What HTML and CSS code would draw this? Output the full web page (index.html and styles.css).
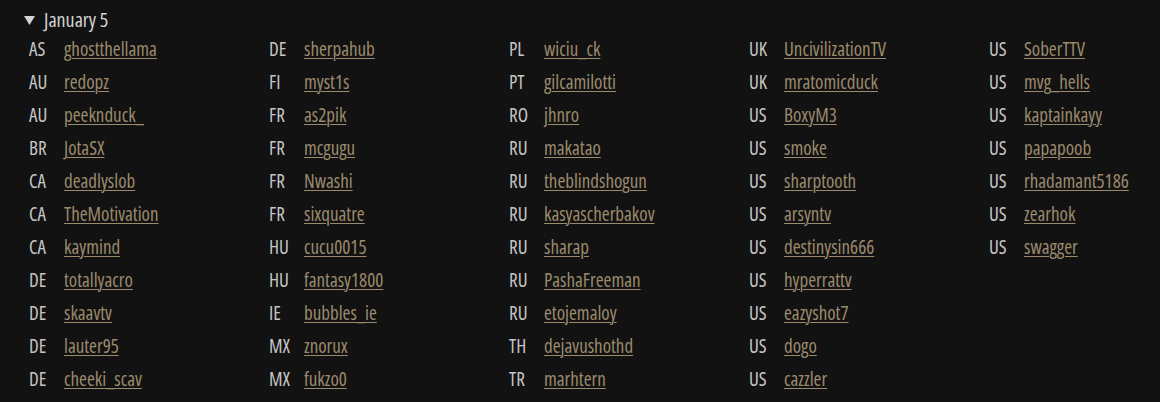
FILE: index.html
```html
<!DOCTYPE html>
<html>
<head>
<meta charset="utf-8">
<link rel="stylesheet" href="styles.css">
</head>
<body>
<section class="day">
  <div class="day-head">
    <svg class="caret" width="11" height="9" viewBox="0 0 11 9"><polygon points="0,0 11,0 5.5,9" fill="currentColor"/></svg>
    <span class="day-title">January 5</span>
  </div>
  <div class="list">
    <div class="entry"><span class="cc">AS</span><a href="#">ghostthellama</a></div>
    <div class="entry"><span class="cc">AU</span><a href="#">redopz</a></div>
    <div class="entry"><span class="cc">AU</span><a href="#">peeknduck_</a></div>
    <div class="entry"><span class="cc">BR</span><a href="#">JotaSX</a></div>
    <div class="entry"><span class="cc">CA</span><a href="#">deadlyslob</a></div>
    <div class="entry"><span class="cc">CA</span><a href="#">TheMotivation</a></div>
    <div class="entry"><span class="cc">CA</span><a href="#">kaymind</a></div>
    <div class="entry"><span class="cc">DE</span><a href="#">totallyacro</a></div>
    <div class="entry"><span class="cc">DE</span><a href="#">skaavtv</a></div>
    <div class="entry"><span class="cc">DE</span><a href="#">lauter95</a></div>
    <div class="entry"><span class="cc">DE</span><a href="#">cheeki_scav</a></div>

    <div class="entry"><span class="cc">DE</span><a href="#">sherpahub</a></div>
    <div class="entry"><span class="cc">FI</span><a href="#">myst1s</a></div>
    <div class="entry"><span class="cc">FR</span><a href="#">as2pik</a></div>
    <div class="entry"><span class="cc">FR</span><a href="#">mcgugu</a></div>
    <div class="entry"><span class="cc">FR</span><a href="#">Nwashi</a></div>
    <div class="entry"><span class="cc">FR</span><a href="#">sixquatre</a></div>
    <div class="entry"><span class="cc">HU</span><a href="#">cucu0015</a></div>
    <div class="entry"><span class="cc">HU</span><a href="#">fantasy1800</a></div>
    <div class="entry"><span class="cc">IE</span><a href="#">bubbles_ie</a></div>
    <div class="entry"><span class="cc">MX</span><a href="#">znorux</a></div>
    <div class="entry"><span class="cc">MX</span><a href="#">fukzo0</a></div>

    <div class="entry"><span class="cc">PL</span><a href="#">wiciu_ck</a></div>
    <div class="entry"><span class="cc">PT</span><a href="#">gilcamilotti</a></div>
    <div class="entry"><span class="cc">RO</span><a href="#">jhnro</a></div>
    <div class="entry"><span class="cc">RU</span><a href="#">makatao</a></div>
    <div class="entry"><span class="cc">RU</span><a href="#">theblindshogun</a></div>
    <div class="entry"><span class="cc">RU</span><a href="#">kasyascherbakov</a></div>
    <div class="entry"><span class="cc">RU</span><a href="#">sharap</a></div>
    <div class="entry"><span class="cc">RU</span><a href="#">PashaFreeman</a></div>
    <div class="entry"><span class="cc">RU</span><a href="#">etojemaloy</a></div>
    <div class="entry"><span class="cc">TH</span><a href="#">dejavushothd</a></div>
    <div class="entry"><span class="cc">TR</span><a href="#">marhtern</a></div>

    <div class="entry"><span class="cc">UK</span><a href="#">UncivilizationTV</a></div>
    <div class="entry"><span class="cc">UK</span><a href="#">mratomicduck</a></div>
    <div class="entry"><span class="cc">US</span><a href="#">BoxyM3</a></div>
    <div class="entry"><span class="cc">US</span><a href="#">smoke</a></div>
    <div class="entry"><span class="cc">US</span><a href="#">sharptooth</a></div>
    <div class="entry"><span class="cc">US</span><a href="#">arsyntv</a></div>
    <div class="entry"><span class="cc">US</span><a href="#">destinysin666</a></div>
    <div class="entry"><span class="cc">US</span><a href="#">hyperrattv</a></div>
    <div class="entry"><span class="cc">US</span><a href="#">eazyshot7</a></div>
    <div class="entry"><span class="cc">US</span><a href="#">dogo</a></div>
    <div class="entry"><span class="cc">US</span><a href="#">cazzler</a></div>

    <div class="entry"><span class="cc">US</span><a href="#">SoberTTV</a></div>
    <div class="entry"><span class="cc">US</span><a href="#">mvg_hells</a></div>
    <div class="entry"><span class="cc">US</span><a href="#">kaptainkayy</a></div>
    <div class="entry"><span class="cc">US</span><a href="#">papapoob</a></div>
    <div class="entry"><span class="cc">US</span><a href="#">rhadamant5186</a></div>
    <div class="entry"><span class="cc">US</span><a href="#">zearhok</a></div>
    <div class="entry"><span class="cc">US</span><a href="#">swagger</a></div>
  </div>
</section>
</body>
</html>
```
FILE: styles.css
```css
html, body {
  margin: 0;
  padding: 0;
  background: #121212;
}
body {
  font-family: "Open Sans", "Roboto Condensed", sans-serif;
  font-stretch: 75%;
  font-size: 19px;
  color: #c9c9c9;
  height: 402px;
  overflow: hidden;
}
.day-head {
  display: flex;
  align-items: center;
  gap: 9px;
  padding: 7px 0 0 24px;
  height: 25px;
  line-height: 25px;
  font-size: 20px;
  color: #d2d2d2;
}
.caret {
  display: block;
  margin-top: 1px;
}
.list {
  display: grid;
  grid-auto-flow: column;
  grid-template-rows: repeat(11, 33px);
  grid-template-columns: repeat(4, 240px) auto;
  padding-left: 29px;
  margin-top: 1px;
  line-height: 33px;
}
.entry {
  display: flex;
  white-space: nowrap;
}
.cc {
  width: 35px;
  flex: none;
  color: #c6c6c6;
}
.entry a {
  color: #9b8a6c;
  text-decoration: underline;
  text-decoration-thickness: 1px;
  text-underline-offset: 2px;
}
```
